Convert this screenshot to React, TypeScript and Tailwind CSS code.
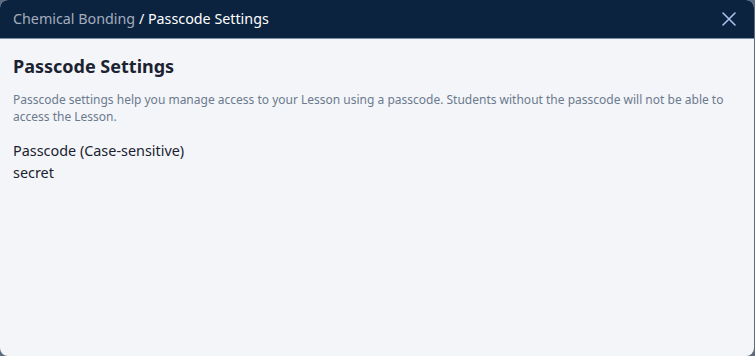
const CloseIcon = () => (
  <svg width="16" height="16" viewBox="0 0 16 16" fill="none">
    <path d="M2 2L14 14M14 2L2 14" stroke="#a9c1ec" strokeWidth="1.6" strokeLinecap="round" />
  </svg>
);

const App = () => {
  return (
    <div
      className="w-[755px] h-[356px] bg-[#5c6b80] flex"
      style={{ fontFamily: '"Noto Sans", "Open Sans", sans-serif' }}
    >
      <div className="w-[754px] h-full flex flex-col rounded-lg overflow-hidden bg-[#f3f5f9]">
        <header className="h-[39px] bg-[#0c2340] flex items-center pl-[13px] pr-[17px] border-b border-[#7d8ea6]">
          <h1 className="text-[14.3px] leading-none text-white">
            <span className="text-[#a3adbd]">Chemical Bonding</span> / Passcode Settings
          </h1>
          <button className="ml-auto flex items-center justify-center">
            <CloseIcon />
          </button>
        </header>
        <main className="flex-1 px-[13px] pt-[15px]">
          <h2 className="text-[18px] leading-[24px] font-bold text-[#1b2230]">Passcode Settings</h2>
          <p className="mt-[13px] text-[12px] leading-[17px] text-[#6c7a8e]">
            Passcode settings help you manage access to your Lesson using a passcode. Students without the passcode will not be able to access the Lesson.
          </p>
          <div className="mt-[15px] text-[14.4px] leading-[22px] text-[#1b2230]">
            <div>Passcode (Case-sensitive)</div>
            <div>secret</div>
          </div>
        </main>
      </div>
    </div>
  );
};

export default App;
